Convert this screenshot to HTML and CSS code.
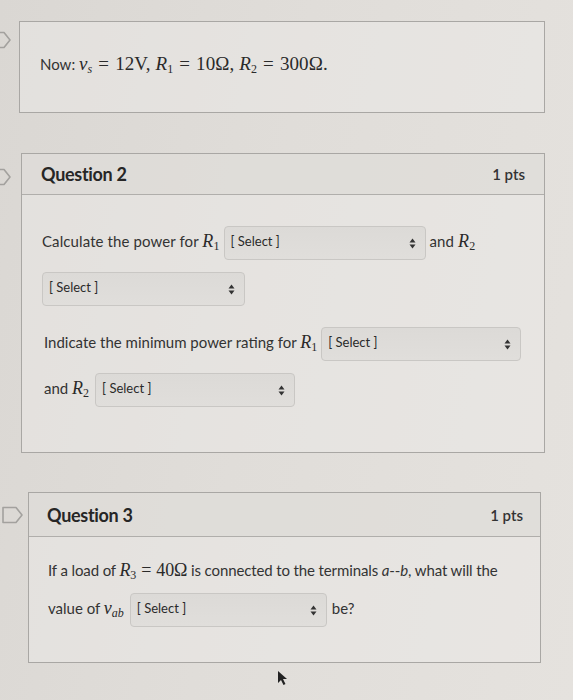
FILE: index.html
```html
<!DOCTYPE html>
<html>
<head>
<meta charset="utf-8">
<link rel="stylesheet" href="styles.css">
</head>
<body>
<div class="page">
  <div class="row row1">
    <svg class="flag" width="22" height="18" viewBox="0 0 22 18"><path d="M1 1.5 H14 L20 9 L14 16.5 H1 Z" fill="none" stroke="#a3a19e" stroke-width="1.6" stroke-linejoin="round"/></svg>
    <div class="card card1">
      <p class="now">Now: <span class="m"><i>v</i><sub><i>s</i></sub><span class="eq">=</span>12V, <i>R</i><sub>1</sub><span class="eq">=</span>10Ω, <i>R</i><sub>2</sub><span class="eq">=</span>300Ω.</span></p>
    </div>
  </div>

  <div class="row row2">
    <svg class="flag" width="22" height="18" viewBox="0 0 22 18"><path d="M1 1.5 H14 L20 9 L14 16.5 H1 Z" fill="none" stroke="#a3a19e" stroke-width="1.6" stroke-linejoin="round"/></svg>
    <div class="card card2">
      <div class="head"><span class="title">Question 2</span><span class="pts">1 pts</span></div>
      <div class="body body2">
        <div class="line l1">Calculate the power for <span class="m"><i>R</i><sub>1</sub></span><span class="sel w202"><span>[ Select ]</span><svg class="arr" width="7" height="11" viewBox="0 0 7 11"><path d="M3.5 0.5 L6.5 4.5 H0.5 Z M3.5 10.5 L6.5 6.5 H0.5 Z" fill="#333"/></svg></span>and <span class="m"><i>R</i><sub>2</sub></span></div>
        <div class="line l2"><span class="sel w203 first"><span>[ Select ]</span><svg class="arr" width="7" height="11" viewBox="0 0 7 11"><path d="M3.5 0.5 L6.5 4.5 H0.5 Z M3.5 10.5 L6.5 6.5 H0.5 Z" fill="#333"/></svg></span></div>
        <div class="line l3">Indicate the minimum power rating for <span class="m"><i>R</i><sub>1</sub></span><span class="sel w200"><span>[ Select ]</span><svg class="arr" width="7" height="11" viewBox="0 0 7 11"><path d="M3.5 0.5 L6.5 4.5 H0.5 Z M3.5 10.5 L6.5 6.5 H0.5 Z" fill="#333"/></svg></span></div>
        <div class="line l4">and <span class="m"><i>R</i><sub>2</sub></span><span class="sel w200"><span>[ Select ]</span><svg class="arr" width="7" height="11" viewBox="0 0 7 11"><path d="M3.5 0.5 L6.5 4.5 H0.5 Z M3.5 10.5 L6.5 6.5 H0.5 Z" fill="#333"/></svg></span></div>
      </div>
    </div>
  </div>

  <div class="row row3">
    <svg class="flag" width="22" height="18" viewBox="0 0 22 18"><path d="M1 1.5 H14 L20 9 L14 16.5 H1 Z" fill="none" stroke="#a3a19e" stroke-width="1.6" stroke-linejoin="round"/></svg>
    <div class="card card3">
      <div class="head head3"><span class="title">Question 3</span><span class="pts">1 pts</span></div>
      <div class="body body3">
        <div class="line l5">If a load of <span class="m"><i>R</i><sub>3</sub><span class="eq">=</span>40Ω</span> is connected to the terminals <i class="ab">a</i>--<i class="ab">b</i>, what will the</div>
        <div class="line l6">value of <span class="m"><i>v</i><sub><i>ab</i></sub></span><span class="sel w197"><span>[ Select ]</span><svg class="arr" width="7" height="11" viewBox="0 0 7 11"><path d="M3.5 0.5 L6.5 4.5 H0.5 Z M3.5 10.5 L6.5 6.5 H0.5 Z" fill="#333"/></svg></span>be?</div>
      </div>
    </div>
  </div>

  <div class="cursor-row">
    <svg class="cursor" width="12" height="16" viewBox="0 0 12 16"><path d="M1 1 L1 13 L4 10 L6.5 15 L8.5 14 L6 9 L10 9 Z" fill="#222"/></svg>
  </div>
</div>
</body>
</html>
```

FILE: styles.css
```css
html, body {
  margin: 0;
  padding: 0;
}
body {
  width: 573px;
  height: 700px;
  overflow: hidden;
  background: linear-gradient(100deg, #dad7d3 0%, #e0ddd9 45%, #e5e2de 100%);
  font-family: Lato, "Open Sans", sans-serif;
  color: #2f2f2f;
}
.page {
  padding-top: 21px;
}
.row {
  display: flex;
  align-items: flex-start;
}
.flag {
  flex: none;
  margin-left: -10px;
}
.row1 .flag { margin-top: 10px; }
.row1 .card { margin-left: 7px; }
.row2 { margin-top: 40px; }
.row2 .flag { margin-top: 15px; }
.row2 .card { margin-left: 9px; }
.row3 { margin-top: 39px; }
.row3 .flag { margin-top: 14px; margin-left: 2px; }
.row3 .card { margin-left: 4px; }

.card {
  box-sizing: border-box;
  border: 1px solid #a9a7a4;
  background: rgba(236, 234, 231, 0.5);
}
.card1 {
  width: 526px;
  height: 92px;
}
.card2 {
  width: 524px;
  height: 300px;
}
.card3 {
  width: 513px;
  height: 171px;
}
.now {
  margin: 0;
  padding: 31px 0 0 20px;
  font-size: 15px;
  color: #333;
}
.m {
  font-family: "Liberation Serif", "DejaVu Serif", serif;
  font-size: 18px;
  color: #2a2a2a;
}
.now .m {
  font-size: 19px;
  letter-spacing: 0.1px;
}
.now .eq {
  margin: 0 6px;
}
.m i {
  font-style: italic;
}
.m sub {
  font-size: 12px;
  vertical-align: -3px;
  line-height: 0;
}
.eq {
  margin: 0 5px;
}
.head {
  display: flex;
  justify-content: space-between;
  align-items: center;
  height: 41px;
  box-sizing: border-box;
  padding: 0 19px 0 19px;
  border-bottom: 1px solid #b0aeab;
  background: rgba(214, 212, 209, 0.45);
}
.head3 {
  height: 44px;
  padding: 0 17px 0 18px;
}
.title {
  font-size: 18px;
  font-weight: 700;
  color: #262626;
  letter-spacing: -0.3px;
}
.pts {
  font-size: 15px;
  font-weight: 600;
  color: #333;
}
.body {
  font-size: 15px;
  color: #333;
}
.body2 {
  padding: 29px 0 0 20px;
}
.line {
  white-space: nowrap;
  height: 34px;
  line-height: 34px;
}
.sel {
  box-sizing: border-box;
  height: 34px;
  display: inline-flex;
  vertical-align: middle;
  justify-content: space-between;
  align-items: flex-start;
  padding: 6px 9px 0 6px;
  margin: 0 4px 0 4px;
  border: 1px solid #c9c7c4;
  border-radius: 4px;
  background: linear-gradient(180deg, #dcdad7 0%, #e0dedb 100%);
  font-size: 13px;
  line-height: 16px;
  color: #2a2a2a;
  letter-spacing: 0;
}
.l1 .sel { margin-left: 4px; }
.sel.first { margin-left: 0; }
.sel .arr {
  margin-top: 5px;
}
.w202 { width: 202px; }
.w203 { width: 203px; }
.w200 { width: 200px; }
.w197 { width: 197px; }

.l1 { letter-spacing: 0.1px; }
.l2 { margin-top: 12px; }
.l3 { margin-top: 21px; margin-left: 2px; }
.l3 .sel { margin-left: 4px; }
.l4 { margin-top: 12px; margin-left: 2px; }
.l4 .sel { margin-left: 6px; }
.body3 {
  padding: 18px 0 0 19px;
}
.l5 { height: 30px; line-height: 30px; letter-spacing: -0.12px; }
.ab {
  font-style: italic;
}
.l6 { margin-top: 6px; }
.l6 .sel { margin: 0 5px 0 6px; }

.cursor-row {
  padding: 7px 0 0 277px;
}
```
